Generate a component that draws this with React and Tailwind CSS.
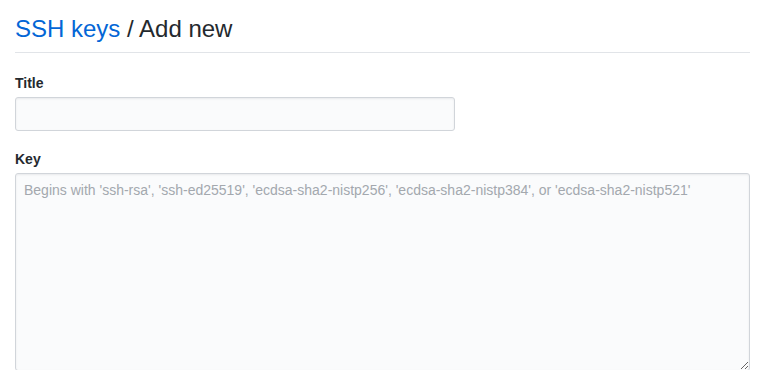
export default function App() {
  return (
    <div className="min-h-screen bg-white px-[15px] font-['Liberation_Sans',Arial,sans-serif] text-[#24292e] overflow-hidden h-[370px]">
      <div className="w-[735px]">
        <div className="flex pt-[14px] pb-[8px] border-b border-[#e1e4e8]">
          <h2 className="text-[24px] font-normal leading-[30px]">
            <a href="#" className="text-[#0366d6]">SSH keys</a> / Add new
          </h2>
        </div>

        <form className="mt-[20px]">
          <dl>
            <dt className="text-[14px] font-bold leading-[20px] mb-[4px]">
              <label>Title</label>
            </dt>
            <dd>
              <input
                type="text"
                className="w-[440px] h-[34px] px-[8px] text-[14px] bg-[#fafbfc] border border-[#d1d5da] rounded-[3px] shadow-[inset_0_1px_2px_rgba(27,31,35,0.075)] outline-none"
              />
            </dd>
          </dl>
          <dl className="mt-[18px]">
            <dt className="text-[14px] font-bold leading-[20px] mb-[4px]">
              <label>Key</label>
            </dt>
            <dd>
              <textarea
                placeholder="Begins with 'ssh-rsa', 'ssh-ed25519', 'ecdsa-sha2-nistp256', 'ecdsa-sha2-nistp384', or 'ecdsa-sha2-nistp521'"
                className="block w-[735px] h-[198px] px-[8px] py-[6px] text-[14px] leading-[20px] bg-[#fafbfc] border border-[#d1d5da] rounded-[3px] shadow-[inset_0_1px_2px_rgba(27,31,35,0.075)] outline-none placeholder:text-[#a3a8ae]"
              />
            </dd>
          </dl>
        </form>
      </div>
    </div>
  );
}
